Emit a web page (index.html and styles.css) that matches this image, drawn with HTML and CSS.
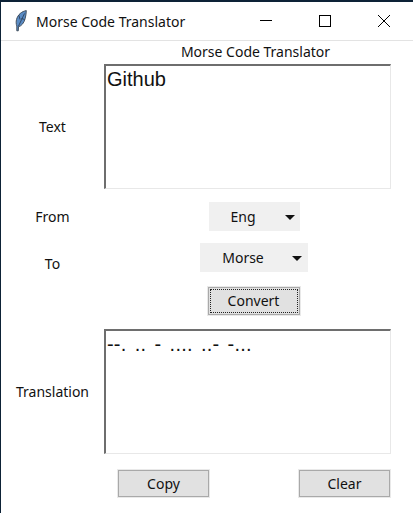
FILE: index.html
```html
<!DOCTYPE html>
<html lang="en">
<head>
<meta charset="utf-8">
<title>Morse Code Translator</title>
<link rel="stylesheet" href="styles.css">
</head>
<body>
<div class="window">
  <header class="titlebar">
    <svg class="feather" viewBox="0 0 12 22" width="12" height="22" aria-hidden="true">
      <path d="M11.300 .6C7 1.300 2.800 4.500 1.500 9.500 1 11.500 1 14 1.800 16L1.800 20.800 3.300 20.800 3.500 16.800C6.500 16 9 13 10.200 8.500 10.800 6 11.300 3 11.300 .6Z" fill="#5a8bc4" stroke="#3a4654" stroke-width=".9"/>
      <path d="M9.500 3.500 3.300 16.500M5 9.500 4 5.500M6.500 8.500 9.500 9.500" stroke="#1f2c3d" stroke-width=".7" fill="none"/>
    </svg>
    <span class="title">Morse Code Translator</span>
    <div class="controls">
      <svg class="ctl" viewBox="0 0 46 14" aria-hidden="true"><path d="M17 6.500H29" stroke="#000" fill="none"/></svg>
      <svg class="ctl" viewBox="0 0 46 14" aria-hidden="true"><rect x="17.500" y="1.500" width="11" height="11" stroke="#000" fill="none"/></svg>
      <svg class="ctl" viewBox="0 0 46 14" aria-hidden="true"><path d="M17 1 29 13M29 1 17 13" stroke="#000" fill="none"/></svg>
    </div>
  </header>
  <main class="form">
    <h1 class="heading">Morse Code Translator</h1>
    <div class="row text-row">
      <span class="label">Text</span>
      <div class="box github">Github</div>
    </div>
    <div class="row from-row">
      <span class="label">From</span>
      <div class="center"><div class="select eng"><span>Eng</span><i class="caret"></i></div></div>
    </div>
    <div class="row to-row">
      <span class="label to-label">To</span>
      <div class="center"><div class="select morse"><span>Morse</span><i class="caret"></i></div></div>
    </div>
    <div class="row convert-row">
      <span></span>
      <div class="center"><button class="btn convert"><span class="focus">Convert</span></button></div>
    </div>
    <div class="row trans-row">
      <span class="label">Translation</span>
      <div class="box morsecode">--. .. - .... ..- -...</div>
    </div>
    <div class="row action-row">
      <span></span>
      <div class="actions">
        <button class="btn action">Copy</button>
        <button class="btn action">Clear</button>
      </div>
    </div>
  </main>
</div>
</body>
</html>
```

FILE: styles.css
```css
html, body {
  margin: 0;
  height: 100%;
  background: #fff;
}
.window {
  box-sizing: border-box;
  height: 513px;
  border-top: 2px solid #0d2236;
  border-left: 1px solid #0d2236;
  font-family: "Noto Sans", sans-serif;
  font-size: 14px;
  color: #111;
  overflow: hidden;
}
.titlebar {
  display: flex;
  align-items: center;
  height: 38px;
  border-bottom: 1px solid #e3e3e3;
  padding-left: 14px;
}
.feather { flex: none; }
.title { margin-left: 9px; }
.controls {
  display: flex;
  margin-left: auto;
  margin-right: 6px;
  gap: 13px;
}
.ctl { width: 46px; height: 14px; display: block; }
.form { display: flex; flex-direction: column; }
.heading {
  margin: 0 0 0 118px;
  width: 273px;
  font: inherit;
  line-height: 22px;
  height: 23px;
  text-align: center;
}
.row {
  display: grid;
  grid-template-columns: 103px 287px;
  align-items: center;
}
.label { text-align: center; }
.box {
  box-sizing: border-box;
  border: 1px solid #e8e8e8;
  border-top: 2px solid #6e6e6e;
  border-left: 2px solid #6e6e6e;
  height: 125px;
  padding-left: 1px;
  font-family: "Liberation Sans", sans-serif;
  font-size: 20px;
  line-height: 26px;
  white-space: pre;
}
.morsecode { word-spacing: 2.5px; letter-spacing: .2px; }
.center { padding-left: 14px; display: flex; justify-content: center; }
.select {
  position: relative;
  display: flex;
  align-items: center;
  justify-content: center;
  background: #f0f0f0;
  height: 29px;
  box-sizing: border-box;
}
.eng { width: 91px; padding-right: 23px; }
.morse { width: 108px; padding-right: 22px; margin-right: 1px; }
.caret {
  position: absolute;
  right: 5px;
  top: 13px;
  border: 5px solid transparent;
  border-top: 5px solid #111;
  border-bottom: 0;
}
.morse .caret { right: 6px; }
.from-row { margin-top: 13px; }
.to-row { margin-top: 12px; }
.to-label { align-self: end; margin-bottom: -1px; }
.convert-row { margin-top: 14px; }
.trans-row { margin-top: 13px; }
.action-row { margin-top: 15px; }
.btn {
  box-sizing: border-box;
  margin: 0;
  padding: 0;
  font: inherit;
  color: inherit;
  background: #e1e1e1;
  border: 1px solid #e9e9e9;
  box-shadow: inset 0 0 0 1px #a9a9a9;
}
.convert { width: 94px; height: 30px; padding: 2px; margin-right: 2px; }
.focus {
  display: block;
  height: 100%;
  box-sizing: border-box;
  border: 1px dotted #222;
  line-height: 22px;
}
.actions {
  display: flex;
  justify-content: space-between;
  padding-left: 13px;
}
.action { width: 93px; height: 29px; line-height: 25px; }
```
